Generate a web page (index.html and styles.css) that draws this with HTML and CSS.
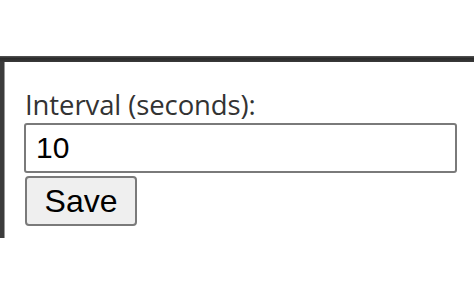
FILE: index.html
```html
<!DOCTYPE html>
<html>
<head>
<meta charset="utf-8">
<link rel="stylesheet" href="styles.css">
</head>
<body>
<div class="top-space"></div>
<div class="top-bar"></div>
<div class="frame">
  <div class="edge"></div>
  <div class="content">
    <label class="label" for="interval">Interval (seconds):</label>
    <input id="interval" class="field" type="text" value="10">
    <button class="save">Save</button>
  </div>
</div>
</body>
</html>
```
FILE: styles.css
```css
html, body {
  margin: 0;
  padding: 0;
  background: #ffffff;
}
.top-space {
  height: 56px;
}
.top-bar {
  height: 6px;
  background: linear-gradient(#555 0, #2a2a2a 40%, #3a3a3a 100%);
}
.frame {
  display: flex;
  height: 176px;
}
.edge {
  width: 4px;
  background: #3c3c3c;
  border-right: 1px solid #9a9a9a;
}
.content {
  display: flex;
  flex-direction: column;
  align-items: flex-start;
  padding-left: 19px;
  padding-top: 25px;
}
.label {
  font-family: "Open Sans", "Noto Sans", sans-serif;
  font-size: 27.5px;
  line-height: 35px;
  color: #333;
  margin-left: 1px;
  margin-bottom: 1px;
  letter-spacing: -0.1px;
}
.field {
  box-sizing: border-box;
  width: 433px;
  height: 50px;
  margin: 0;
  border: 2px solid #7a7a7a;
  border-radius: 3px;
  padding: 0 10px;
  font-family: "Liberation Sans", Arial, sans-serif;
  font-size: 30px;
  color: #000;
  background: #fff;
}
.save {
  box-sizing: border-box;
  width: 112px;
  height: 50px;
  margin: 3px 0 0 1px;
  border: 2px solid #7a7a7a;
  border-radius: 4px;
  background: #efefef;
  font-family: "Liberation Sans", Arial, sans-serif;
  font-size: 32px;
  color: #000;
  padding: 0;
}
```
